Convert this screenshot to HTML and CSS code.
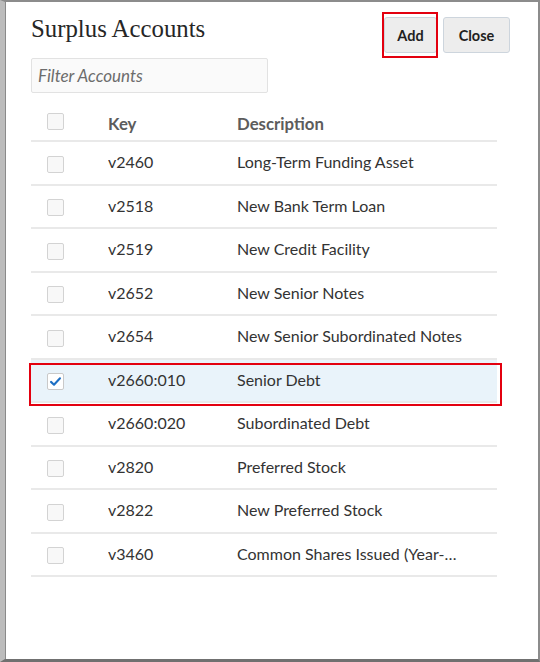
FILE: index.html
```html
<!DOCTYPE html>
<html lang="en">
<head>
<meta charset="utf-8">
<title>Surplus Accounts</title>
<link rel="stylesheet" href="styles.css">
</head>
<body>
<div class="frame">
  <div class="dialog">
    <div class="header">
      <h1 class="title">Surplus Accounts</h1>
      <div class="actions">
        <div class="annotated">
          <button class="btn btn-add" type="button">Add</button>
          <span class="mark mark-add"></span>
        </div>
        <button class="btn btn-close" type="button">Close</button>
      </div>
    </div>
    <input class="filter" type="text" placeholder="Filter Accounts">
    <div class="table">
      <div class="row head">
        <div class="cell cb"><span class="box"></span></div>
        <div class="cell">Key</div>
        <div class="cell">Description</div>
      </div>
      <div class="row"><div class="cell cb"><span class="box"></span></div><div class="cell">v2460</div><div class="cell desc">Long-Term Funding Asset</div></div>
      <div class="row"><div class="cell cb"><span class="box"></span></div><div class="cell">v2518</div><div class="cell desc">New Bank Term Loan</div></div>
      <div class="row"><div class="cell cb"><span class="box"></span></div><div class="cell">v2519</div><div class="cell desc">New Credit Facility</div></div>
      <div class="row"><div class="cell cb"><span class="box"></span></div><div class="cell">v2652</div><div class="cell desc">New Senior Notes</div></div>
      <div class="row"><div class="cell cb"><span class="box"></span></div><div class="cell">v2654</div><div class="cell desc">New Senior Subordinated Notes</div></div>
      <div class="row selected">
        <div class="cell cb"><span class="box checked"><svg viewBox="0 0 16 16" width="15" height="15"><path d="M3.2 8.4 L6.4 11.4 L12.8 4.6" fill="none" stroke="#1d6fc4" stroke-width="2.2" stroke-linecap="round" stroke-linejoin="round"/></svg></span></div>
        <div class="cell">v2660:010</div><div class="cell desc">Senior Debt</div>
        <span class="mark mark-row"></span>
      </div>
      <div class="row"><div class="cell cb"><span class="box"></span></div><div class="cell">v2660:020</div><div class="cell desc">Subordinated Debt</div></div>
      <div class="row"><div class="cell cb"><span class="box"></span></div><div class="cell">v2820</div><div class="cell desc">Preferred Stock</div></div>
      <div class="row"><div class="cell cb"><span class="box"></span></div><div class="cell">v2822</div><div class="cell desc">New Preferred Stock</div></div>
      <div class="row"><div class="cell cb"><span class="box"></span></div><div class="cell">v3460</div><div class="cell desc">Common Shares Issued (Year-End)</div></div>
    </div>
  </div>
</div>
</body>
</html>
```

FILE: styles.css
```css
html, body {
  margin: 0;
  padding: 0;
  background: #ffffff;
}

.frame {
  box-sizing: border-box;
  width: 540px;
  height: 662px;
  border-top: 2px solid #8c8c8c;
  border-right: 2px solid #8c8c8c;
  border-bottom: 3px solid #707070;
  border-left: 5px solid #bcbcbc;
}

.dialog {
  box-sizing: border-box;
  height: 100%;
  border-left: 1px solid #8a8a8a;
  padding: 15px 28px 0 25px;
  font-family: Lato, "Open Sans", sans-serif;
  color: #333333;
}

.header {
  display: flex;
  justify-content: space-between;
  align-items: flex-start;
  height: 36px;
}

.title {
  margin: -1px 0 0 0;
  font-family: "Liberation Serif", "Times New Roman", serif;
  font-weight: normal;
  font-size: 24.8px;
  line-height: 25px;
  color: #262626;
}

.actions {
  display: flex;
  gap: 6px;
}

.annotated {
  position: relative;
}

.btn {
  box-sizing: border-box;
  height: 36px;
  padding: 0;
  border: 1px solid #cdd5dd;
  border-radius: 3px;
  background: #ededed;
  font-family: Lato, "Open Sans", sans-serif;
  font-weight: bold;
  font-size: 14.5px;
  color: #1f1f1f;
}

.btn-add {
  width: 53px;
}

.btn-close {
  width: 67px;
}

.mark {
  position: absolute;
  box-sizing: border-box;
  border: 2px solid #e3000f;
  pointer-events: none;
}

.mark-add {
  left: -2px;
  right: -1px;
  top: -5px;
  bottom: -5px;
}

.filter {
  display: block;
  box-sizing: border-box;
  width: 237px;
  height: 35px;
  margin-top: 5px;
  padding: 0 6px;
  border: 1px solid #e2e2e2;
  border-radius: 2px;
  background: #fafafa;
  font-family: Lato, "Open Sans", sans-serif;
  font-size: 17px;
  color: #333333;
}

.filter::placeholder {
  font-style: italic;
  color: #6c6c6c;
}

.table {
  width: 466px;
  margin-top: 10px;
}

.row {
  position: relative;
  display: grid;
  grid-template-columns: 77px 129px 1fr;
  align-items: center;
  box-sizing: border-box;
  height: 43.5px;
  border-bottom: 2px solid #e9e9e9;
  font-size: 16px;
  color: #333333;
}

.row > .cell {
  padding-bottom: 2px;
}

.row > .cb {
  padding-bottom: 0;
  padding-top: 3px;
}

.row.head {
  height: 39px;
  font-weight: bold;
  font-size: 16.8px;
  color: #5c5c5c;
}

.row.head > .cell {
  padding-bottom: 0;
  padding-top: 3px;
}

.row.head > .cb {
  padding-top: 0;
}

.row.selected {
  background: #e9f3fa;
}

.cell {
  white-space: nowrap;
  overflow: hidden;
  text-overflow: ellipsis;
}

.cell.desc {
  padding-right: 32px;
}

.cb {
  padding-left: 16px;
  display: flex;
  align-items: center;
}

.box {
  box-sizing: border-box;
  width: 17px;
  height: 17px;
  border: 1px solid #d3d3d3;
  border-radius: 2px;
  background: #f8f8f8;
  display: flex;
  align-items: center;
  justify-content: center;
}

.box.checked {
  background: #ffffff;
  border-color: #c9c9c9;
}

.mark-row {
  left: -2px;
  right: -5px;
  top: 3px;
  bottom: -5px;
}
```
